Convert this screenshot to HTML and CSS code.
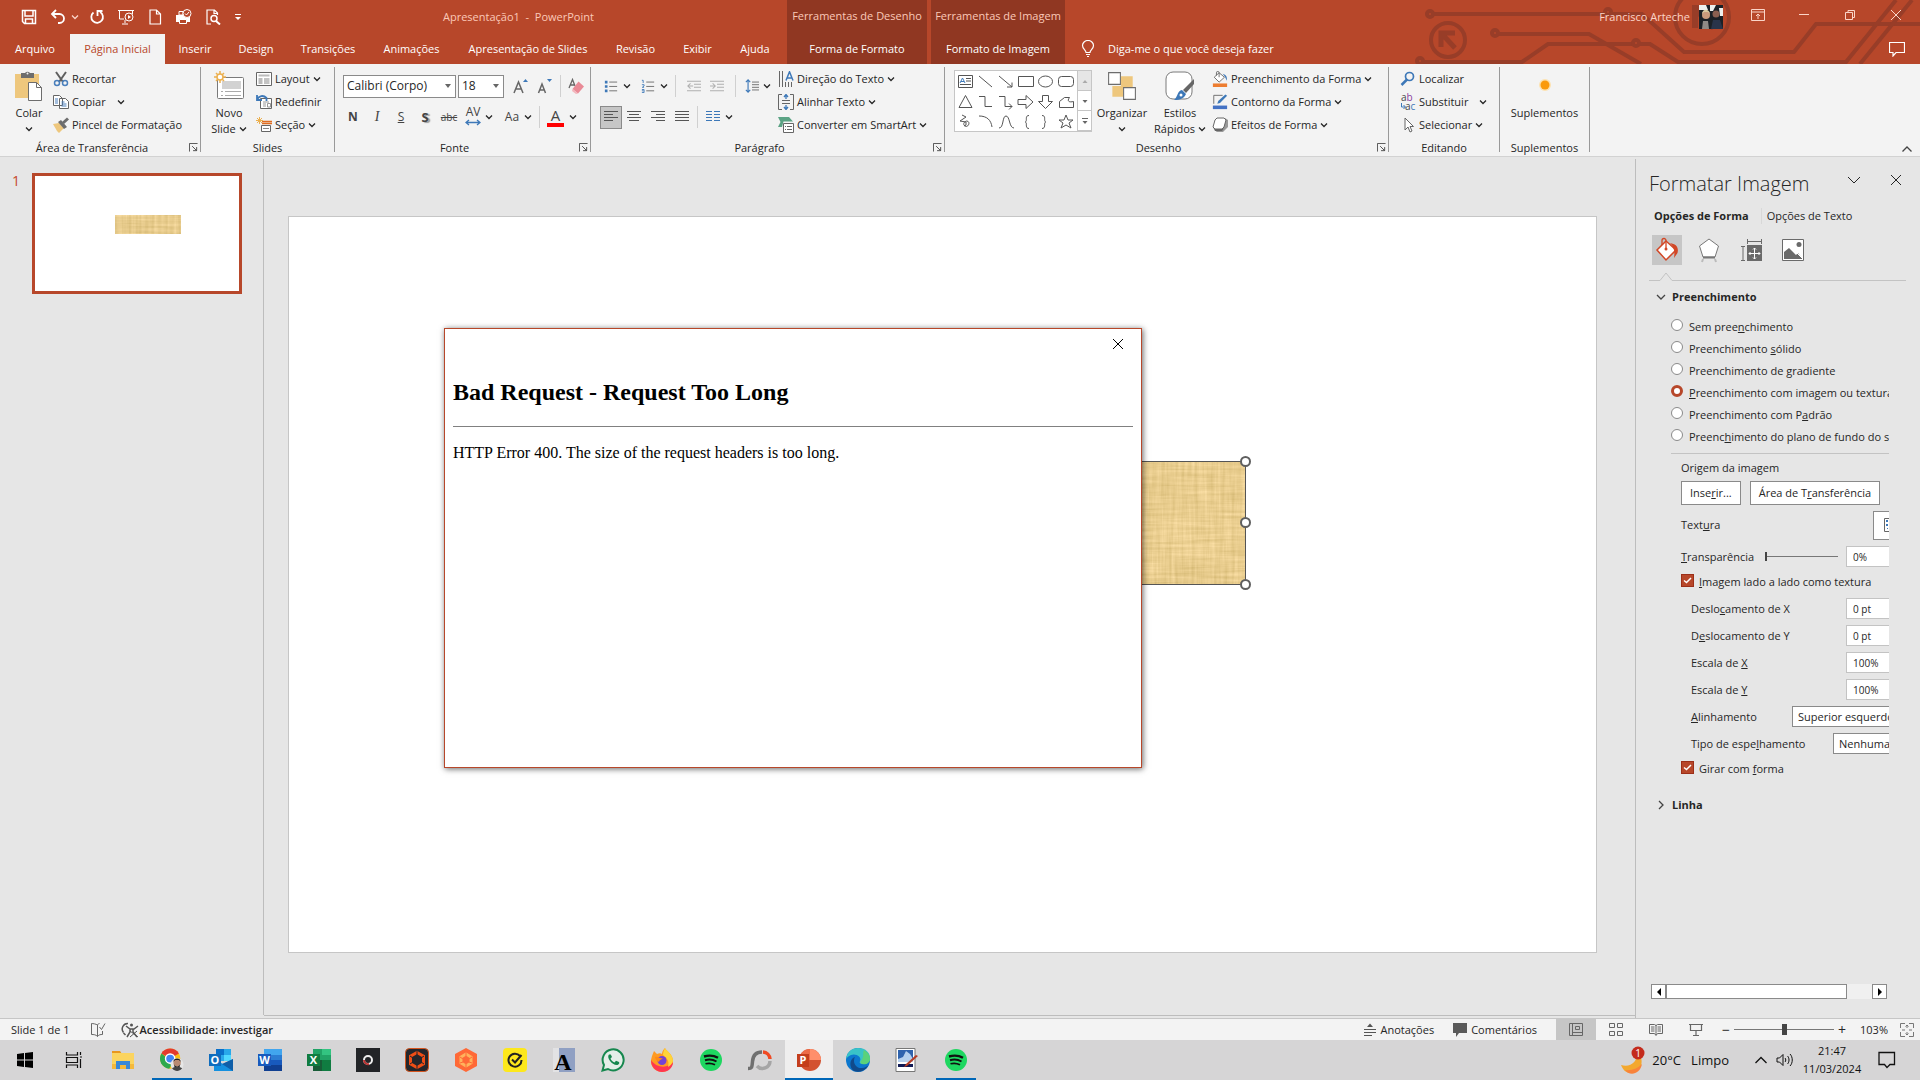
FILE: index.html
```html
<!DOCTYPE html>
<html lang="pt-BR">
<head>
  <meta charset="UTF-8" />
  <meta name="viewport" content="width=device-width, initial-scale=1.0"/>
  <title>Apresentação1 - PowerPoint</title>
  <link rel="stylesheet" href="styles.css">
</head>
<body>
  <!-- icon sprite -->
  <svg class="sprite" aria-hidden="true">
    <symbol id="chev" viewBox="0 0 8 8"><path d="M1 2.500 4 5.500 7 2.500" fill="none" stroke="currentColor" stroke-width="1.300"/></symbol>
    <symbol id="launch" viewBox="0 0 10 10"><path d="M9.500 .5H.5v9M3.500 3.500l5 5M8.500 4.500v4h-4" fill="none" stroke="#444"/></symbol>
    <symbol id="close" viewBox="0 0 12 12"><path d="M1 1l10 10M11 1 1 11" fill="none" stroke="currentColor"/></symbol>
    <symbol id="save" viewBox="0 0 16 16"><path d="M1.500 1.500h13v13h-11l-2-2zM4 1.500v5.500h8v-5.500M4.500 14.500v-4.500h7v4.500" fill="none" stroke="#fff" stroke-width="1.500"/></symbol>
    <symbol id="undo" viewBox="0 0 16 16"><path d="M6 1 2 5l4 4M2 5h7.500a4 4 0 0 1 0 9H8" fill="none" stroke="#fff" stroke-width="1.800"/></symbol>
    <symbol id="redo" viewBox="0 0 16 16"><path d="M4.500 3.500a5.800 5.800 0 1 0 6.500-.5M8.500 7V2h5" fill="none" stroke="#fff" stroke-width="1.800"/></symbol>
    <symbol id="show" viewBox="0 0 16 16"><path d="M0 1.500h16M1.500 2v8H6M14.500 2v3M7 11v3M4 15h6" fill="none" stroke="#fff"/><circle cx="11" cy="8" r="4" fill="none" stroke="#fff"/><path d="M10 6l3 2-3 2z" fill="#fff"/></symbol>
    <symbol id="page" viewBox="0 0 16 16"><path d="M3 1h6.500L13.500 5v10H3zM9.500 1v4h4" fill="none" stroke="#fff" stroke-width="1.200"/></symbol>
    <symbol id="print" viewBox="0 0 16 16"><path d="M0 6h14v7H0z" fill="#fff"/><path d="M3 2.500h4V6H3zM3.500 10.500h7v4h-7z" fill="#b7472a" stroke="#fff"/><circle cx="11" cy="4.500" r="4" fill="#b7472a" stroke="#fff"/><path d="M9 4.500l1.500 1.500L13 3" fill="none" stroke="#fff"/></symbol>
    <symbol id="preview" viewBox="0 0 16 16"><path d="M12.500 6V4L9.500 1H2v14h4M9 1v3.500h3" fill="none" stroke="#fff" stroke-width="1.200"/><circle cx="9" cy="9.500" r="3" fill="none" stroke="#fff" stroke-width="1.500"/><path d="M11 12l4 3.500" stroke="#fff" stroke-width="2"/></symbol>
    <symbol id="more" viewBox="0 0 8 8"><path d="M1 1.500h6" stroke="#fff"/><path d="M1 4h6L4 7z" fill="#fff"/></symbol>
    <symbol id="bulb" viewBox="0 0 14 18"><path d="M5 12.500C5 10 1.500 9 1.500 5.500a5.500 5 0 0 1 11 0C12.500 9 9 10 9 12.500zM5 14.500h4M6 16.500h2" fill="none" stroke="#fff" stroke-width="1.200"/></symbol>
    <symbol id="balloon" viewBox="0 0 16 16"><path d="M.5 1.500h15v10H7l-3 3.500v-3.500H.5z" fill="none" stroke="currentColor" stroke-width="1.200"/></symbol>

    <symbol id="paste" viewBox="0 0 30 32"><path d="M1 4h24v24H1z" fill="#eec77d"/><path d="M7 3h4a3 3 0 0 1 5 0h4v5H7z" fill="#6d6d6d"/><circle cx="13.500" cy="3.500" r="1" fill="#f3f3f3"/><path d="M14.500 12.500h8l5 5v13h-13z" fill="#fff" stroke="#6d6d6d"/><path d="M22.500 12.500v5h5" fill="none" stroke="#6d6d6d"/></symbol>
    <symbol id="cut" viewBox="0 0 16 16"><path d="M3 1l7 10M13 1 6 11" stroke="#5f5f5f" stroke-width="2"/><circle cx="4" cy="12" r="2.500" fill="none" stroke="#4a7fbc" stroke-width="1.500"/><circle cx="12" cy="12" r="2.500" fill="none" stroke="#4a7fbc" stroke-width="1.500"/></symbol>
    <symbol id="copy" viewBox="0 0 16 16"><path d="M.5 1.500h6l3 3v7h-9zM6.500 4.500h6l3 3v7h-9z" fill="#fff" stroke="#666"/><path d="M2 5h3M2 7h3M2 9h3M8.500 8h3M8.500 10h5M8.500 12h5" stroke="#4a7fbc"/></symbol>
    <symbol id="brush" viewBox="0 0 16 16"><path d="M0 7l6-1 5 5-5 5-2-2z" fill="#eec77d"/><path d="M5 5l3-2 6 7-3 2z" fill="#6d6d6d"/><path d="M10 6l5-4.500" stroke="#6d6d6d" stroke-width="3"/></symbol>
    <symbol id="newslide" viewBox="0 0 30 30"><rect x="3.500" y="6.500" width="26" height="21" rx="1" fill="#fff" stroke="#7a7a7a"/><path d="M8 10h19v8H8z" fill="#d2d2d2"/><path d="M7 20.500h2M11 20.500h16M7 24.500h2M11 24.500h16" stroke="#aaa"/><circle cx="6" cy="6" r="3" fill="#fff" stroke="#ecb04f" stroke-width="1.500"/><path d="M6 0v3M6 9v3M0 6h3M9 6h3M2 2l2 2M8 8l2 2M10 2 8 4M2 10l2-2" stroke="#ecb04f" stroke-width="1.500"/></symbol>
    <symbol id="layout" viewBox="0 0 16 16"><path d="M.5 1.500h15v13H.5z" fill="#fff" stroke="#666"/><path d="M2.500 3.500h11v2h-11zM2.500 7h4v6h-4z" fill="#bbb"/><path d="M8 8h5.500M8 10h5.500M8 12h5.500" stroke="#888"/></symbol>
    <symbol id="reset" viewBox="0 0 16 16"><path d="M4.500 4.500h11v10h-11z" fill="#fff" stroke="#666"/><path d="M7 8h6M7 10h3M7 12h3M11.500 9.500h3v3.500h-3z" stroke="#999" fill="none"/><path d="M1 1v5h5M1 5.500C3 2 7 .5 10.500 4v3" fill="none" stroke="#3d78b8" stroke-width="1.800"/></symbol>
    <symbol id="section" viewBox="0 0 16 16"><path d="M6 4.500h10M6 6.500h10" stroke="#e06c1f" stroke-width="1.500"/><path d="M5.500 8.500h9v6h-9z" fill="#fff" stroke="#666"/><path d="M7 11.500h6" stroke="#888"/><path d="M3.500 0v7M0 3.500h7M1 1l5 5M6 1 1 6" stroke="#ecb04f"/></symbol>
    <symbol id="growA" viewBox="0 0 16 16"><path d="M1 15 5.500 4l4.500 11M3 11h5.500" fill="none" stroke="#666" stroke-width="1.500"/><path d="M10 4l2.500-3L15 4z" fill="#3d78b8"/></symbol>
    <symbol id="shrinkA" viewBox="0 0 16 16"><path d="M1.500 15 5 6l3.500 9M3 12h4" fill="none" stroke="#666" stroke-width="1.500"/><path d="M10 1l2.500 3L15 1z" fill="#3d78b8"/></symbol>
    <symbol id="eraser" viewBox="0 0 16 16"><path d="M1 10 4.500 1.500 7 8M2.500 7H6" fill="none" stroke="#666" stroke-width="1.300"/><path d="M10.500 3.500l5.500 5-6 7L4.500 11z" fill="#e98a96"/><path d="M4.500 11l5.500 4.500-2 .5-4-3z" fill="#f3b5bc"/></symbol>
    <symbol id="spacing" viewBox="0 0 16 16"><path d="M1 11.500h14M4 9l-3 2.500L4 14M12 9l3 2.500-3 2.500" fill="none" stroke="#3d78b8" stroke-width="1.300"/></symbol>
    <symbol id="bullets" viewBox="0 0 16 16"><path d="M1 2h3v3H1zM1 7h3v3H1zM1 12h3v3H1z" fill="#3d78b8"/><path d="M6 3.500h9M6 8.500h9M6 13.500h9" stroke="#666"/></symbol>
    <symbol id="numbers" viewBox="0 0 16 16"><path d="M1 1.500h1.500v3M1 6.500h2.500v1.500l-2 1.500h2M1 12h2.500v3.500H1M1 13.500h2" fill="none" stroke="#3d78b8"/><path d="M6 3.500h9M6 8.500h9M6 13.500h9" stroke="#666"/></symbol>
    <symbol id="outdent" viewBox="0 0 16 16"><path d="M0 2.500h16M8 6h8M8 9.500h8M0 13.500h16M1 8h6M4 5 1 8l3 3" fill="none" stroke="#b0b0b0" stroke-width="1.200"/></symbol>
    <symbol id="indent" viewBox="0 0 16 16"><path d="M0 2.500h16M8 6h8M8 9.500h8M0 13.500h16M0 8h6M3 5l3 3-3 3" fill="none" stroke="#b0b0b0" stroke-width="1.200"/></symbol>
    <symbol id="linesp" viewBox="0 0 16 16"><path d="M3.500 1v14M1 3.500 3.500 1 6 3.500M1 12.500 3.500 15 6 12.500" fill="none" stroke="#3d78b8" stroke-width="1.300"/><path d="M8 3.500h8M8 6.500h8M8 9.500h8M8 12.500h8" stroke="#666"/></symbol>
    <symbol id="al" viewBox="0 0 14 14"><path d="M0 1.500h14M0 4.500h9M0 7.500h14M0 10.500h9" stroke="#555"/></symbol>
    <symbol id="ac" viewBox="0 0 14 14"><path d="M0 1.500h14M2 4.500h10M0 7.500h14M2 10.500h10" stroke="#555"/></symbol>
    <symbol id="ar" viewBox="0 0 14 14"><path d="M0 1.500h14M5 4.500h9M0 7.500h14M5 10.500h9" stroke="#555"/></symbol>
    <symbol id="aj" viewBox="0 0 14 14"><path d="M0 1.500h14M0 4.500h14M0 7.500h14M0 10.500h14" stroke="#555"/></symbol>
    <symbol id="cols" viewBox="0 0 14 14"><path d="M0 1.500h6M0 4.500h6M0 7.500h6M0 10.500h6M8 1.500h6M8 4.500h6M8 7.500h6M8 10.500h6" stroke="#3d78b8"/></symbol>
    <symbol id="dir" viewBox="0 0 16 16"><path d="M1.500 0v16M4.500 0v16M7.500 11v5M10.500 11v5M13.500 11v5" stroke="#666"/><path d="M8 9.500 11.500.8 15 9.500M9 7h5" fill="none" stroke="#3d78b8" stroke-width="1.500"/></symbol>
    <symbol id="valign" viewBox="0 0 16 16"><path d="M4 .5H.5v15H4M12 .5h3.500v15H12M4 6.500h8M4 9.500h8" fill="none" stroke="#666"/><path d="M8 0v5M6 3l2-2.500L10 3M8 11v5M6 13l2 2.500L10 13" fill="none" stroke="#3d78b8" stroke-width="1.300"/></symbol>
    <symbol id="smart" viewBox="0 0 16 16"><path d="M0 0h11l4 4.500H5.500L4 10H0l2.500-5z" fill="#5ba384"/><path d="M5.500 6.500h10v9h-10z" fill="#fff" stroke="#666"/><path d="M7 9.500h1M9 9.500h5M7 12.500h1M9 12.500h5" stroke="#666"/></symbol>
    <symbol id="arrange" viewBox="0 0 28 28"><path d="M13 5h11v11H13zM5 14h10v10H5z" fill="#eec77d"/><path d="M1.500 1.500h11v11h-11zM15.500 15.500h11v11h-11z" fill="#fff" stroke="#6d6d6d"/></symbol>
    <symbol id="styles" viewBox="0 0 30 30"><rect x="1" y="1" width="26" height="27" rx="7" fill="#fff" stroke="#7a7a7a"/><path d="M29 8v5l-8 9-3-3z" fill="#666"/><path d="M17 19l4 4c-2 4-5 6-12 6 4-3 3-9 8-10z" fill="#3d78b8"/><circle cx="16" cy="24" r="1.500" fill="#fff"/></symbol>
    <symbol id="fill" viewBox="0 0 16 18"><path d="M7 2l6 5-6 5.500L1.500 7z" fill="#fff" stroke="#666"/><path d="M7 7V2a1.500 1.500 0 0 0-3 0v3" fill="none" stroke="#666"/><path d="M11 3c4 1 5.500 4 4.500 8-1-3-2-5-4.500-8z" fill="#3d78b8"/><path d="M0 14h16v4H0z" fill="#ed7d31"/></symbol>
    <symbol id="outline" viewBox="0 0 16 18"><path d="M1 11V1.500h10" fill="none" stroke="#666"/><path d="M5 11l1-3L14 .5 16 2 8 10z" fill="#3d78b8"/><path d="M0 13h16v4H0z" fill="#4472c4"/></symbol>
    <symbol id="effects" viewBox="0 0 16 16"><path d="M4 15h7l5-5V3l-3-2z" fill="#999"/><path d="M5 1h7l2 2-2 7-2 2H3L1 10 3 3z" fill="#fff" stroke="#666"/><path d="M1 10l2 4h7l3-4-2 2H3z" fill="#666"/></symbol>
    <symbol id="find" viewBox="0 0 16 16"><circle cx="9.500" cy="5.500" r="4" fill="none" stroke="#3d78b8" stroke-width="1.700"/><path d="M7 8.500 1.500 14" stroke="#3d78b8" stroke-width="2.500"/></symbol>
    <symbol id="cursor" viewBox="0 0 16 16"><path d="M5 1v12l3-3 2 5 2-1-2-4.500h3.500z" fill="#fff" stroke="#666"/></symbol>
    <symbol id="spotify" viewBox="0 0 24 24"><circle cx="12" cy="12" r="11" fill="#1ed760"/><path d="M5 8.500c5-1.500 10-1 14 1.300" stroke="#111" stroke-width="2.400" fill="none"/><path d="M6 12.300c4-1.200 8-.8 11.500 1.200" stroke="#111" stroke-width="2" fill="none"/><path d="M6.500 15.800c3.500-1 6.500-.6 9.500 1" stroke="#111" stroke-width="1.700" fill="none"/></symbol>

    <symbol id="p-fill" viewBox="0 0 26 26"><path d="M12 4 22 13 12 23 3 13z" fill="#fff" stroke="#d24726" stroke-width="1.500"/><path d="M12 12V3.500a2 2 0 0 0-4 0V8" fill="none" stroke="#d24726" stroke-width="1.300"/><circle cx="12" cy="12" r="1.500" fill="#d24726"/><path d="M16 6c6 1 9 4 7.500 10L20 21c1-7 0-11-4-15z" fill="#d24726"/></symbol>
    <symbol id="p-pent" viewBox="0 0 26 26"><path d="M13 2 22.500 9 19 20H7L3.500 9z" fill="#fff" stroke="#777"/><path d="M7 20.500h12" stroke="#777" stroke-width="2"/><path d="M7 22l-1 3M19 22l1 3" stroke="#bbb" stroke-width="2"/></symbol>
    <symbol id="p-size" viewBox="0 0 26 26"><path d="M9 8h15v16H9z" fill="#6a6a6a"/><path d="M16.500 11v11M11 16.500h11M15 12.500l1.500-1.500 1.500 1.500M15 20.500l1.500 1.500 1.500-1.500M12.500 15 11 16.500l1.500 1.500M20.500 15l1.500 1.500-1.500 1.500" fill="none" stroke="#fff"/><path d="M9.500 2v5M23.500 2v5M10 4.500h13M3 9.500h4M3 23.500h4M5 10v13" stroke="#6a6a6a"/></symbol>
    <symbol id="p-img" viewBox="0 0 26 26"><path d="M2.500 2.500h21v21h-21z" fill="#fff" stroke="#6a6a6a"/><path d="M4 22v-7l5-4 4 4 3 3 2-2 4 5v1z" fill="#6a6a6a"/><path d="M14 13l8 8" stroke="#fff"/><circle cx="19" cy="7.500" r="2.500" fill="#6a6a6a"/></symbol>
  </svg>

  <div class="app">
    <header class="header">
      <svg class="circuit" viewBox="0 0 520 64" aria-hidden="true">
        <g fill="none" stroke="#983d28" stroke-width="4">
          <circle cx="30" cy="14" r="3"/><path d="M34 14h170"/><circle cx="208" cy="12" r="3"/><path d="M212 14h30l42 38h110l22-28h104"/>
          <circle cx="48" cy="40" r="17"/><path d="M55 48 42 34M41 47V33h14" stroke-width="5"/>
          <circle cx="95" cy="33" r="3"/><path d="M99 34h90l52 30"/><circle cx="20" cy="61" r="3"/><path d="M24 62h98l26-18h84"/><circle cx="236" cy="43" r="3"/><path d="M240 44h10l28 18h168l50-62M460 64l52-64"/>
          <circle cx="302" cy="17" r="27"/><path d="M314 28 296 10M295 28V8h20" stroke-width="6"/>
        </g>
      </svg>
      <div class="head-left">
        <div class="quick">
          <button aria-label="Salvar"><svg><use href="#save"/></svg></button>
          <button aria-label="Desfazer"><svg><use href="#undo"/></svg></button>
          <button class="tiny undo-more" aria-label="Opções de desfazer"><svg><use href="#chev"/></svg></button>
          <button aria-label="Refazer"><svg><use href="#redo"/></svg></button>
          <button aria-label="Apresentar"><svg><use href="#show"/></svg></button>
          <button aria-label="Novo"><svg><use href="#page"/></svg></button>
          <button aria-label="Impressão rápida"><svg><use href="#print"/></svg></button>
          <button aria-label="Visualizar impressão"><svg><use href="#preview"/></svg></button>
          <button class="tiny" aria-label="Personalizar"><svg><use href="#more"/></svg></button>
          <span class="doc-title">Apresentação1&nbsp; - &nbsp;PowerPoint</span>
        </div>
        <nav class="tabs">
          <a href="#">Arquivo</a>
          <a href="#" class="active">Página Inicial</a>
          <a href="#">Inserir</a>
          <a href="#">Design</a>
          <a href="#">Transições</a>
          <a href="#">Animações</a>
          <a href="#">Apresentação de Slides</a>
          <a href="#">Revisão</a>
          <a href="#">Exibir</a>
          <a href="#">Ajuda</a>
        </nav>
      </div>
      <div class="context"><span>Ferramentas de Desenho</span><a href="#">Forma de Formato</a></div>
      <div class="context"><span>Ferramentas de Imagem</span><a href="#">Formato de Imagem</a></div>
      <div class="head-right">
        <div class="user-row">
          <span>Francisco Arteche</span>
          <svg class="avatar" viewBox="0 0 24 24"><path d="M0 0h24v24H0z" fill="#1b2026"/><path d="M0 0h7l2 5H0zM11 0h6l-3 6h-3zM20 3h4v8h-3z" fill="#eef0ee"/><circle cx="7" cy="10" r="4" fill="#c99a7c"/><circle cx="17" cy="9" r="3.500" fill="#8a5f50"/><path d="M3 9c0-5 7-6 8 0l-2-2H5z" fill="#d8c9a0"/><path d="M3 24l1-8h5l1 8z" fill="#8f8a86"/><path d="M12 24l2-9h7l3 9z" fill="#29344a"/></svg>
          <button aria-label="Opções da faixa"><svg viewBox="0 0 14 14"><path d="M.5 1.500h13v11H.5zM.5 4h13M7 11V6M5 8l2-2 2 2" fill="none" stroke="currentColor"/></svg></button>
          <button aria-label="Minimizar"><svg viewBox="0 0 14 14"><path d="M2 6.500h10" stroke="currentColor"/></svg></button>
          <button aria-label="Restaurar"><svg viewBox="0 0 14 14"><path d="M2.500 4.500h7v7h-7zM5 4V2.500h6.500v7H10" fill="none" stroke="currentColor"/></svg></button>
          <button class="small" aria-label="Fechar"><svg><use href="#close"/></svg></button>
        </div>
        <div class="tell-row">
          <svg class="bulb"><use href="#bulb"/></svg>
          <a href="#">Diga-me o que você deseja fazer</a>
          <button aria-label="Comentários"><svg><use href="#balloon"/></svg></button>
        </div>
      </div>
    </header>

    <section class="ribbon">
      <div class="group g-clip">
        <div class="group-body">
          <button class="big"><svg class="art"><use href="#paste"/></svg>Colar<svg class="chev"><use href="#chev"/></svg></button>
          <div class="list">
            <button><svg><use href="#cut"/></svg>Recortar</button>
            <button><svg><use href="#copy"/></svg>Copiar<svg class="chev apart"><use href="#chev"/></svg></button>
            <button><svg><use href="#brush"/></svg>Pincel de Formatação</button>
          </div>
        </div>
        <div class="group-label">Área de Transferência<button aria-label="Mais opções"><svg><use href="#launch"/></svg></button></div>
      </div>

      <div class="group g-slides">
        <div class="group-body">
          <button class="big"><svg class="art"><use href="#newslide"/></svg>Novo<span>Slide <svg class="chev"><use href="#chev"/></svg></span></button>
          <div class="list">
            <button><svg><use href="#layout"/></svg>Layout<svg class="chev"><use href="#chev"/></svg></button>
            <button><svg><use href="#reset"/></svg>Redefinir</button>
            <button><svg><use href="#section"/></svg>Seção<svg class="chev"><use href="#chev"/></svg></button>
          </div>
        </div>
        <div class="group-label">Slides</div>
      </div>

      <div class="group g-font">
        <div class="group-body stack">
          <div class="tools snug">
            <select class="combo font-name" aria-label="Fonte"><option>Calibri (Corpo)</option></select>
            <select class="combo font-size" aria-label="Tamanho da fonte"><option>18</option></select>
            <button aria-label="Aumentar fonte"><svg><use href="#growA"/></svg></button>
            <button aria-label="Diminuir fonte"><svg><use href="#shrinkA"/></svg></button>
            <i class="bar"></i>
            <button aria-label="Limpar formatação"><svg><use href="#eraser"/></svg></button>
          </div>
          <div class="tools">
            <button class="b">N</button>
            <button class="i">I</button>
            <button class="u">S</button>
            <button class="sh">S</button>
            <button class="st">abc</button>
            <button class="av">AV<svg><use href="#spacing"/></svg></button>
            <svg class="chev"><use href="#chev"/></svg>
            <button class="aa">Aa</button>
            <svg class="chev"><use href="#chev"/></svg>
            <i class="bar"></i>
            <button class="color">A</button>
            <svg class="chev"><use href="#chev"/></svg>
          </div>
        </div>
        <div class="group-label">Fonte<button aria-label="Mais opções"><svg><use href="#launch"/></svg></button></div>
      </div>

      <div class="group g-par">
        <div class="group-body">
          <div class="stack">
            <div class="tools">
              <button aria-label="Marcadores"><svg><use href="#bullets"/></svg></button><svg class="chev"><use href="#chev"/></svg>
              <button aria-label="Numeração"><svg><use href="#numbers"/></svg></button><svg class="chev"><use href="#chev"/></svg>
              <i class="bar"></i>
              <button aria-label="Diminuir recuo"><svg><use href="#outdent"/></svg></button>
              <button aria-label="Aumentar recuo"><svg><use href="#indent"/></svg></button>
              <i class="bar"></i>
              <button class="line-btn" aria-label="Espaçamento"><svg><use href="#linesp"/></svg></button><svg class="chev"><use href="#chev"/></svg>
            </div>
            <div class="tools snug">
              <button class="on" aria-label="Esquerda"><svg><use href="#al"/></svg></button>
              <button aria-label="Centro"><svg><use href="#ac"/></svg></button>
              <button aria-label="Direita"><svg><use href="#ar"/></svg></button>
              <button aria-label="Justificar"><svg><use href="#aj"/></svg></button>
              <i class="bar"></i>
              <button aria-label="Colunas"><svg><use href="#cols"/></svg></button><svg class="chev"><use href="#chev"/></svg>
            </div>
          </div>
          <div class="list">
            <button><svg><use href="#dir"/></svg>Direção do Texto<svg class="chev"><use href="#chev"/></svg></button>
            <button><svg><use href="#valign"/></svg>Alinhar Texto<svg class="chev"><use href="#chev"/></svg></button>
            <button><svg><use href="#smart"/></svg>Converter em SmartArt<svg class="chev"><use href="#chev"/></svg></button>
          </div>
        </div>
        <div class="group-label">Parágrafo<button aria-label="Mais opções"><svg><use href="#launch"/></svg></button></div>
      </div>

      <div class="group g-draw">
        <div class="group-body">
          <div class="gallery">
            <svg viewBox="0 0 122 60" fill="none" stroke="#555" aria-label="Formas">
              <path d="M3.500 4.500h14v12h-14z"/><path d="M11 7.500h5M11 10h5M5 13.500h11"/><path d="M5 12l2.500-5L10 12M6 10.500h3" stroke="#3d78b8"/>
              <path d="M24 5l13 11M44 5l13 11M57 11.500V16h-5"/>
              <path d="M63.500 5.500h15v10h-15z"/><ellipse cx="90.500" cy="10.500" rx="7" ry="5.500"/><rect x="103.500" y="5.500" width="15" height="10" rx="3"/>
              <path d="M10.500 24.500 17 36.500H4zM24 25.500h6v10h7M44 25.500h6v10h7M54 32.500l3 3-3 3"/>
              <path d="M63 28.500h8v-4l7 6.500-7 6.500v-4h-8zM87.500 24.500h6v6h4l-7 7-7-7h4zM104.500 36.500v-6l5-4h5c-3 4 0 5 4 4v6z"/>
              <path d="M7 44l4 2-6 4 6 1 0 3-2 1M12 50c4 1 1 7-2 5s0-5 2-5M24 45c8 0 12 4 13 11M44 57c5 0 3-12 7-12s3 12 8 12"/>
              <path d="M74 44.500c-4 0-2 4-3 6-1 1-1 0 0 1s-1 6 3 6M87 44.500c4 0 2 4 3 6 1 1 1 0 0 1s1 6-3 6M111 44l2 5h5l-4 3 2 5-5-3-5 3 2-5-4-3h5z"/>
            </svg>
            <div class="gallery-nav">
              <button class="off" aria-label="Acima"><svg viewBox="0 0 8 8"><path d="M1.500 6h5L4 3z" fill="#aaa"/></svg></button>
              <button aria-label="Abaixo"><svg viewBox="0 0 8 8"><path d="M1.500 3h5L4 6z" fill="#666"/></svg></button>
              <button aria-label="Mais"><svg viewBox="0 0 8 8"><path d="M1 1.500h6" stroke="#666"/><path d="M1.500 4h5L4 7z" fill="#666"/></svg></button>
            </div>
          </div>
          <button class="big"><svg class="art"><use href="#arrange"/></svg>Organizar<svg class="chev"><use href="#chev"/></svg></button>
          <button class="big"><svg class="art"><use href="#styles"/></svg>Estilos<span>Rápidos <svg class="chev"><use href="#chev"/></svg></span></button>
          <div class="list">
            <button><svg><use href="#fill"/></svg>Preenchimento da Forma<svg class="chev"><use href="#chev"/></svg></button>
            <button><svg><use href="#outline"/></svg>Contorno da Forma<svg class="chev"><use href="#chev"/></svg></button>
            <button><svg><use href="#effects"/></svg>Efeitos de Forma<svg class="chev"><use href="#chev"/></svg></button>
          </div>
        </div>
        <div class="group-label">Desenho<button aria-label="Mais opções"><svg><use href="#launch"/></svg></button></div>
      </div>

      <div class="group g-edit">
        <div class="group-body">
          <div class="list">
            <button><svg><use href="#find"/></svg>Localizar</button>
            <button><svg class="abac" viewBox="0 0 16 20"><text x="1" y="9">a<tspan class="violet">b</tspan></text><text x="5" y="18">a<tspan class="blue">c</tspan></text><path d="M1.500 11v4H5M3.500 13l2 2-2 2" fill="none" stroke="#3d78b8"/></svg>Substituir<svg class="chev apart"><use href="#chev"/></svg></button>
            <button><svg><use href="#cursor"/></svg>Selecionar<svg class="chev"><use href="#chev"/></svg></button>
          </div>
        </div>
        <div class="group-label">Editando</div>
      </div>

      <div class="group g-addin">
        <div class="group-body">
          <button class="big"><svg class="art" viewBox="0 0 30 30"><circle cx="15" cy="14" r="6" fill="#fde2b0"/><circle cx="15" cy="14" r="4.500" fill="#fa9a0c"/></svg>Suplementos</button>
        </div>
        <div class="group-label">Suplementos</div>
      </div>
      <button class="collapse" aria-label="Recolher"><svg viewBox="0 0 12 8"><path d="M1.500 6.500 6 2l4.500 4.500" fill="none" stroke="#444" stroke-width="1.300"/></svg></button>
    </section>

    <main class="workspace">
      <div class="thumbs">
        <span>1</span>
        <div class="thumb">
          <svg class="texture" aria-hidden="true"><rect width="100%" height="100%" filter="url(#papyrus)"/></svg>
        </div>
      </div>

      <div class="canvas">
        <div class="slide">
          <div class="shape">
            <svg class="texture" aria-hidden="true">
              <defs>
                <filter id="papyrus" x="0" y="0" width="100%" height="100%" color-interpolation-filters="sRGB">
                  <feTurbulence type="fractalNoise" baseFrequency="0.02 0.35" numOctaves="3" seed="4"/>
                  <feColorMatrix values="0.25 0 0 0 0.79  0.25 0 0 0 0.68  0.32 0 0 0 0.4  0 0 0 0 1" result="h"/>
                  <feTurbulence type="fractalNoise" baseFrequency="0.3 0.02" numOctaves="3" seed="9"/>
                  <feColorMatrix values="0.25 0 0 0 0.79  0.25 0 0 0 0.68  0.32 0 0 0 0.4  0 0 0 0 1"/>
                  <feComposite in2="h" operator="arithmetic" k2="0.5" k3="0.5"/>
                </filter>
              </defs>
              <rect width="100%" height="100%" filter="url(#papyrus)"/>
            </svg>
            <i class="handle top"></i><i class="handle mid"></i><i class="handle bottom"></i>
          </div>
        </div>
      </div>

      <aside class="pane">
        <div class="pane-head">
          <h2>Formatar Imagem</h2>
          <button aria-label="Opções do painel"><svg viewBox="0 0 14 14"><path d="M1 4l6 6 6-6" fill="none" stroke="currentColor"/></svg></button>
          <button aria-label="Fechar painel"><svg><use href="#close"/></svg></button>
        </div>
        <div class="pane-tabs"><a href="#" class="active">Opções de Forma</a><a href="#">Opções de Texto</a></div>
        <div class="pane-icons">
          <button class="on" aria-label="Preenchimento e Linha"><svg><use href="#p-fill"/></svg></button>
          <button aria-label="Efeitos"><svg><use href="#p-pent"/></svg></button>
          <button aria-label="Tamanho"><svg><use href="#p-size"/></svg></button>
          <button aria-label="Imagem"><svg><use href="#p-img"/></svg></button>
        </div>
        <svg class="notch" viewBox="0 0 257 10"><path d="M0 8.500h11L17 1l6 7.500h234" fill="none" stroke="#c3c3c3"/></svg>
        <div class="pane-clip">
          <form class="fill-form">
            <h3><svg viewBox="0 0 10 10"><path d="M1 3l4 4 4-4" fill="none" stroke="#444" stroke-width="1.300"/></svg>Preenchimento</h3>
            <div class="radios">
              <label><input type="radio" name="fill"><span>Sem pree<u>n</u>chimento</span></label>
              <label><input type="radio" name="fill"><span>Preenchimento <u>s</u>ólido</span></label>
              <label><input type="radio" name="fill"><span>Preenchimento de <u>g</u>radiente</span></label>
              <label><input type="radio" name="fill" checked><span><u>P</u>reenchimento com imagem ou textura</span></label>
              <label><input type="radio" name="fill"><span>Preenchimento com P<u>a</u>drão</span></label>
              <label><input type="radio" name="fill"><span>Preenc<u>h</u>imento do plano de fundo do slide</span></label>
            </div>
            <div class="source">
              <p>Origem da imagem</p>
              <button type="button">Inse<u>r</u>ir...</button>
              <button type="button">Área de T<u>r</u>ansferência</button>
            </div>
            <div class="field tall">
              <span>Text<u>u</u>ra</span>
              <button type="button" class="tex-btn" aria-label="Textura"><svg viewBox="0 0 16 16"><path d="M.5 1.500h15v13H.5z" fill="#fff" stroke="#666"/><path d="M2 3h2v2H2zM5 3h2v2H5zM2 7h2v2H2zM5 8h2v1H5zM3 11h1v1H3z" fill="#3d78b8"/></svg></button>
            </div>
            <div class="field"><label for="transp"><u>T</u>ransparência</label><input type="range" id="transp" value="0" min="0" max="100"><input type="text" aria-label="Transparência em %" value="0%"></div>
            <label class="check"><input type="checkbox" checked><span><u>I</u>magem lado a lado como textura</span></label>
            <div class="inner">
              <div class="field"><label for="dx">Deslo<u>c</u>amento de X</label><input type="text" id="dx" value="0 pt"></div>
              <div class="field"><label for="dy">D<u>e</u>slocamento de Y</label><input type="text" id="dy" value="0 pt"></div>
              <div class="field"><label for="sx">Escala de <u>X</u></label><input type="text" id="sx" value="100%"></div>
              <div class="field"><label for="sy">Escala de <u>Y</u></label><input type="text" id="sy" value="100%"></div>
              <div class="field"><label for="align"><u>A</u>linhamento</label><select id="align" class="wide"><option>Superior esquerdo</option></select></div>
              <div class="field"><label for="mirror">Tipo de espe<u>l</u>hamento</label><select id="mirror"><option>Nenhuma</option></select></div>
            </div>
            <label class="check"><input type="checkbox" checked><span>Girar com <u>f</u>orma</span></label>
            <h3 class="line"><svg viewBox="0 0 10 10"><path d="M3 1l4 4-4 4" fill="none" stroke="#444" stroke-width="1.300"/></svg>Linha</h3>
          </form>
        </div>
        <div class="hscroll">
          <button aria-label="Rolar à esquerda"><svg viewBox="0 0 8 8"><path d="M6 0v8L2 4z"/></svg></button>
          <div class="hthumb"></div>
          <button aria-label="Rolar à direita"><svg viewBox="0 0 8 8"><path d="M2 0v8l4-4z"/></svg></button>
        </div>
      </aside>

      <div class="dialog" role="dialog">
        <button aria-label="Fechar"><svg><use href="#close"/></svg></button>
        <h2>Bad Request - Request Too Long</h2>
        <hr>
        <p>HTTP Error 400. The size of the request headers is too long.</p>
      </div>
    </main>

    <footer class="status">
      <span>Slide 1 de 1</span>
      <svg class="book" viewBox="0 0 16 14"><path d="M7.500 2v11.500M7.500 2C6 1 3 .5 1.500 .5v11c2 0 4.500 0 6 2 1.500-2 3-2 5-2V8M7.500 2c.5-1 1-1.500 2-1.500M9.500 4l2 2.500 3.500-6" fill="none" stroke="#666"/></svg>
      <svg class="a11y" viewBox="0 0 18 16"><path d="M7 1.500a5.500 5.500 0 0 0-4.500 9M2.500 11l2 2M5 4l4 3h4l4-3M9 7v3l-3 5M12 7v3l4 5" fill="none" stroke="#555" stroke-width="1.500"/><circle cx="10.500" cy="3" r="1.500" fill="#555"/><path d="M9 9l8 6M16 9l-7 6" stroke="#555"/></svg>
      <strong>Acessibilidade: investigar</strong>
      <div class="status-right">
        <button class="notes"><svg viewBox="0 0 14 14"><path d="M4 4l3-3.500L10 4z" fill="#555"/><path d="M1 6.500h12M1 9.500h12M1 12.500h8" stroke="#555"/></svg>Anotações</button>
        <button class="comments"><svg viewBox="0 0 14 14"><path d="M0 0h14v10H6l-3 4v-4H0z" fill="#5a5a5a"/></svg>Comentários</button>
        <button class="view on" aria-label="Normal"><svg viewBox="0 0 14 14"><path d="M.5 .5h13v12H.5zM3.500 1v11.500M4 9.500h9.500M6.500 3.500h4v3h-4z" fill="none" stroke="#666"/></svg></button>
        <button class="view" aria-label="Classificação"><svg viewBox="0 0 14 14"><path d="M.5 .5h5v4h-5zM8.500 .5h5v4h-5zM.5 8.500h5v4h-5zM8.500 8.500h5v4h-5z" fill="none" stroke="#666"/></svg></button>
        <button class="view" aria-label="Leitura"><svg viewBox="0 0 14 14"><path d="M.5 1.500h5l1.500 1 1.500-1h5v9h-5L7 12.500l-1.500-2h-5zM7 2v10M2 4h3.500M2 6h3.500M2 8h3.500M8.500 4H12M8.500 6H12M8.500 8H12" fill="none" stroke="#666"/></svg></button>
        <button class="view" aria-label="Apresentação"><svg viewBox="0 0 14 14"><path d="M0 1.500h14M1.500 2v5.500h11V2M7 8v4M4 12.500h6" fill="none" stroke="#666" stroke-width="1.200"/></svg></button>
        <button class="step" aria-label="Menos zoom">−</button>
        <input type="range" class="zoom" aria-label="Zoom" min="0" max="100" value="50">
        <button class="step" aria-label="Mais zoom">+</button>
        <span class="pct">103%</span>
        <button class="fit" aria-label="Ajustar"><svg viewBox="0 0 14 14"><path d="M5 .5H.5V5M9 .5h4.500V5M5 13.500H.5V9M9 13.500h4.500V9M7 2v3M7 9v3M2 7h3M9 7h3M5.500 3.500 7 2l1.500 1.500M5.500 10.500 7 12l1.500-1.500" fill="none" stroke="#777"/></svg></button>
      </div>
    </footer>

    <footer class="taskbar">
      <button aria-label="Iniciar"><svg viewBox="0 0 24 24"><path d="M4 6l7-1v6.500H4zM12 5l8-1v7.500h-8zM4 12.500h7V19l-7-1zM12 12.500h8V20l-8-1z"/></svg></button>
      <button aria-label="Visão de tarefas"><svg viewBox="0 0 24 24"><path d="M4.500 4v3h11V4M4.500 9.500h11v5h-11zM4.500 20v-3h11v3M18.500 4v3M18.500 11v9M18 9h2" fill="none" stroke="#111" stroke-width="1.200"/></svg></button>
      <button aria-label="Explorador"><svg viewBox="0 0 24 24"><path d="M1 3h8l2 3H1z" fill="#e8971e"/><path d="M1 5h22v16H1z" fill="#fbd45f"/><path d="M1 16h22v5H1z" fill="#f5b93c"/><path d="M5 13h14v8h-4v-4H9v4H5z" fill="#3988d8"/></svg></button>
      <button class="open" aria-label="Chrome"><svg viewBox="0 0 26 26"><circle cx="11" cy="11.500" r="11" fill="#fbc116"/><path d="M11 11.500 1.500 6a11 11 0 0 1 19 0z" fill="#e33b2e"/><path d="M1.500 6A11 11 0 0 0 10 22.500l4-7z" fill="#2da94f"/><circle cx="11" cy="11.500" r="5" fill="#4285f4" stroke="#fff" stroke-width="1.500"/><circle cx="18.500" cy="18" r="7" fill="#e6e6e6"/><circle cx="18.500" cy="16" r="4" fill="#b88a72"/><path d="M14.500 15c0-5 8-5 8 0l-2-2h-4zM15 17c1 4 6 4 7 0l-1 5h-5z" fill="#222"/><path d="M13 22c2-2 9-2 11 0-3 4-8 4-11 0z" fill="#444"/></svg></button>
      <button aria-label="Outlook"><svg viewBox="0 0 24 24"><path d="M7 1h15v12H7z" fill="#28a8ea"/><path d="M7 1h8v6H7z" fill="#0a6fc9"/><path d="M15 7h7v6h-7z" fill="#50d9ff"/><path d="M5 11l9 5 10-5v12H5z" fill="#1490df"/><path d="M24 11v12L13 16z" fill="#0f5ea8"/><rect y="6" width="12" height="12" fill="#0f6cbd"/><text x="6" y="16" class="logo-letter">O</text></svg></button>
      <button aria-label="Word"><svg viewBox="0 0 24 24"><path d="M6 1h18v6H6z" fill="#41a5ee"/><path d="M6 7h18v5H6z" fill="#2b7cd3"/><path d="M6 12h18v5H6z" fill="#185abd"/><path d="M6 17h18v6H6z" fill="#103f91"/><rect y="6" width="13" height="12" fill="#185abd"/><text x="6.500" y="16" class="logo-letter">W</text></svg></button>
      <button aria-label="Excel"><svg viewBox="0 0 24 24"><path d="M6 1h18v22H6z" fill="#21a366"/><path d="M15 1h9v6h-9z" fill="#33c481"/><path d="M6 12h9v11H6z" fill="#185c37"/><path d="M15 12h9v11h-9z" fill="#107c41"/><rect y="6" width="13" height="12" fill="#107c41"/><text x="6.500" y="16" class="logo-letter">X</text></svg></button>
      <button aria-label="Gravador"><svg viewBox="0 0 24 24"><path d="M0 0h24v24H0z" fill="#222427"/><circle cx="12" cy="12" r="4" fill="none" stroke="#eee" stroke-width="2"/><path d="M8 12a4 4 0 0 0 5 4" stroke="#b33" stroke-width="2" fill="none"/></svg></button>
      <button aria-label="Cubo escuro"><svg viewBox="0 0 24 24"><rect x=".5" y=".5" width="23" height="23" rx="4" fill="#25262b" stroke="#d6541d"/><path d="M12 4.500l6.500 3.700v7.600L12 19.500l-6.500-3.700V8.200z" fill="none" stroke="#f04e16" stroke-width="3"/><path d="M12 3v4M19 8l-3 2M19 16l-3-2M12 21v-4M5 16l3-2M5 8l3 2" stroke="#25262b"/></svg></button>
      <button aria-label="Cubo laranja"><svg viewBox="0 0 24 24"><path d="M12 0l11 6v12l-11 6-11-6V6z" fill="#ff6937"/><path d="M12 6l5 3v6l-5 3-5-3V9z" fill="none" stroke="#ffb35c" stroke-width="3"/><path d="M12 4v4M18 9l-3 2M18 15l-3-1M12 20v-4M6 15l3-1M6 9l3 2" stroke="#ff6937"/></svg></button>
      <button aria-label="Norton"><svg viewBox="0 0 24 24"><rect width="24" height="24" rx="4" fill="#fde81c"/><path d="M17 8A6.500 6.500 0 1 0 18.500 12" fill="none" stroke="#222" stroke-width="2"/><path d="M9 11.500l3 3L18.500 7" fill="none" stroke="#222" stroke-width="2"/></svg></button>
      <button aria-label="Fonte A"><svg class="spill" viewBox="0 0 24 24"><path d="M1 0h7v24H1z" fill="#e2e2e4"/><path d="M7 0h16v24H7z" fill="#90a0c3"/><text x="11" y="22" class="serif-letter">A</text></svg></button>
      <button aria-label="WhatsApp"><svg viewBox="0 0 24 24"><path d="M1.500 22.500 3 17A10.500 10.500 0 1 1 7 21z" fill="#e4eee8" stroke="#16874e" stroke-width="2"/><path d="M8 6.500c-3 3 3 11 8.500 10.500 2-1 2-2 1.500-3l-3-1.200-1.500 1.700c-2-.8-3.500-2.300-4-4L11 9 9.800 6.500z" fill="#16874e"/></svg></button>
      <button aria-label="Firefox"><svg viewBox="0 0 24 24"><path d="M2 8l2-5 3 3c2-1 4-1 5 0 0-3 2-5 3-6 1 3 8 6 8 13 0 6-5 11-11 11S0 19 1 12z" fill="#ff9a22"/><path d="M1 12c0 8 6 12 11 12 6 0 11-4 11-10-3 5-15 8-22-2z" fill="#ff3650"/><path d="M15 0c1 3 8 6 8 13-1 3-3 5-5 6 2-7-2-9-5-12 0-3 1-5 2-7z" fill="#ffd43a"/><circle cx="12" cy="12.500" r="4.500" fill="#7542d5"/><path d="M5 9c3-1 4 2 8 1-2 2-4 2-4 4-2-1-4-3-4-5z" fill="#ff8a16"/></svg></button>
      <button aria-label="Spotify"><svg><use href="#spotify"/></svg></button>
      <button aria-label="Monitor"><svg viewBox="0 0 24 24"><path d="M0 20.500c4 0 4-1 4.500-7C5 7 8 4 14 4" fill="none" stroke="#707070" stroke-width="3.500"/><path d="M15 4a7.500 7.500 0 0 1 7 7" fill="none" stroke="#f04a23" stroke-width="3.500"/><path d="M22 13a7.500 7.500 0 0 1-13 5" fill="none" stroke="#a5a5a5" stroke-width="3.500"/></svg></button>
      <button class="open current" aria-label="PowerPoint"><svg viewBox="0 0 24 24"><circle cx="13" cy="12" r="11" fill="#d35230"/><path d="M13 1v11h11A11 11 0 0 0 13 1z" fill="#ff8f6b"/><path d="M13 1v11H2A11 11 0 0 1 13 1z" fill="#ed6c47"/><rect y="6" width="12" height="13" fill="#c43e1c"/><text x="6" y="16" class="logo-letter">P</text></svg></button>
      <button aria-label="Edge"><svg viewBox="0 0 24 24"><circle cx="12" cy="12" r="12" fill="#0c77ce"/><path d="M0 11C1 3 7 0 12 0c8 0 12 5 12 10 0 4-3 6-7 6-3 0-4-1-3-3 2-4-4-8-9-6-3 1-4 3-5 4z" fill="#39c3c8"/><path d="M18 2c5 3 6 6 6 9 0 4-4 6-8 5-2-1-2-2-1-3 4-5 1-8 3-11z" fill="#5bd27a"/><path d="M9 9c-3 5 1 12 7 11 3 0 5-2 6-2-3 5-9 7-14 5C3 20 3 11 9 9z" fill="#114a8b"/></svg></button>
      <button aria-label="Editor"><svg viewBox="0 0 24 24"><path d="M1 .5h19v23H1z" fill="#fff" stroke="#777"/><path d="M3 2h15v12H3z" fill="#2f62ad"/><path d="M3 11l5-2 3-6 4 3 3 5v3H3z" fill="#b5cfed"/><path d="M3 16h15v3H3z" fill="#111a55"/><path d="M23 8 12 18l-3 1 2-3L21 7z" fill="#b43c26"/></svg></button>
      <button class="open" aria-label="Spotify"><svg><use href="#spotify"/></svg></button>
      <div class="tray">
        <svg class="moon" viewBox="0 0 24 28"><path d="M0 19c9 3 17-3 16-13 7 4 7 20-6 21C5 27 2 24 0 19z" fill="#f3a82e"/><path d="M4 24c6 1 12-1 17-6-2 11-13 12-17 6z" fill="#f9833b"/><circle cx="17" cy="7" r="6.500" fill="#c42b1c"/><text x="17" y="11" class="badge-text">1</text></svg>
        <span class="weather">20°C&nbsp;&nbsp; Limpo</span>
        <svg class="up" viewBox="0 0 14 10"><path d="M1.500 8 7 2.500 12.500 8" fill="none" stroke="#111" stroke-width="1.300"/></svg>
        <svg class="speaker" viewBox="0 0 18 16"><path d="M1 6h2.500L7 2.500v11L3.500 10H1zM9 6c1 1 1 3 0 4M11.500 4c2 2 2 6 0 8M14 2c3 3 3 9 0 12" fill="none" stroke="#111"/></svg>
        <div class="clock"><span>21:47</span><span>11/03/2024</span></div>
        <svg class="notify" viewBox="0 0 18 18"><path d="M1 1.500h15.500v12H12l-3 3-2.500-3H1z" fill="none" stroke="#111" stroke-width="1.300"/></svg>
      </div>
    </footer>
  </div>
</body>
</html>
```
FILE: styles.css
```css
* {
  box-sizing: border-box;
}

body {
  margin: 0;
  font-family: "Segoe UI", "Open Sans", sans-serif;
  font-size: 11px;
  line-height: 16px;
  color: #262626;
}

button {
  font: inherit;
  color: inherit;
  background: none;
  border: none;
  padding: 0;
  display: flex;
  align-items: center;
  justify-content: center;
  white-space: nowrap;
}

a {
  color: inherit;
  text-decoration: none;
}

svg {
  display: block;
  flex: none;
}

.sprite {
  position: absolute;
  width: 0;
  height: 0;
}

.app {
  height: 100vh;
  display: flex;
  flex-direction: column;
  overflow: hidden;
}

.chev {
  width: 8px;
  height: 8px;
}

/* header */
.header {
  position: relative;
  display: flex;
  height: 64px;
  background: #b7472a;
  color: #fff;
}

.circuit {
  position: absolute;
  right: 0;
  top: 0;
  width: 520px;
  height: 64px;
}

.head-left {
  width: 787px;
}

.quick {
  display: flex;
  align-items: center;
  height: 34px;
  padding-left: 21px;
  gap: 13px;
}

.quick button,
.quick svg {
  width: 16px;
  height: 16px;
}

.quick .tiny,
.quick .tiny svg {
  width: 8px;
  height: 8px;
}

.quick .undo-more {
  margin: 0 -3px 0 -8px;
  color: #fbd5c8;
}

.doc-title {
  margin-left: 188px;
  color: #fbc9b8;
}

.tabs {
  display: grid;
  grid-template-columns: 70px 95px 60px 62px 82px 85px 148px 67px 57px 58px;
  height: 30px;
}

.tabs a {
  display: flex;
  align-items: center;
  justify-content: center;
  white-space: nowrap;
}

.tabs .active {
  background: #f3f3f3;
  color: #b7472a;
}

.context {
  position: relative;
  width: 140px;
  background: #903722;
  text-align: center;
  white-space: nowrap;
}

.context + .context {
  width: 134px;
  margin-left: 4px;
}

.context span,
.context a {
  display: block;
  height: 34px;
  line-height: 32px;
  color: #fbc9b8;
}

.context a {
  height: 30px;
  line-height: 30px;
  color: #fff;
}

.head-right {
  position: relative;
  flex: 1;
}

.user-row {
  display: flex;
  align-items: center;
  justify-content: flex-end;
  height: 34px;
  padding-right: 17px;
  color: #fbd5c8;
}

.user-row button {
  width: 14px;
  height: 18px;
  align-items: flex-start;
  margin-left: 32px;
}

.user-row .avatar + button {
  margin-left: 28px;
}

.user-row button svg {
  width: 14px;
  height: 14px;
}

.user-row .small svg {
  width: 12px;
}

.avatar {
  width: 24px;
  height: 24px;
  margin-left: 9px;
}

.tell-row {
  display: flex;
  align-items: center;
  height: 30px;
  padding: 0 15px 0 16px;
}

.bulb {
  width: 14px;
  height: 18px;
  margin-right: 13px;
}

.tell-row button {
  margin-left: auto;
}

.tell-row button svg {
  width: 16px;
  height: 16px;
}

/* ribbon */
.ribbon {
  position: relative;
  display: flex;
  height: 93px;
  padding-top: 3px;
  background: #f3f3f3;
  border-bottom: 1px solid #d2d2d2;
}

.group {
  display: flex;
  flex-direction: column;
  border-right: 1px solid #999;
  height: 85px;
}

.g-clip { width: 201px; }
.g-slides { width: 134px; }
.g-font { width: 256px; }
.g-par { width: 354px; }
.g-draw { width: 444px; }
.g-edit { width: 111px; }
.g-addin { width: 90px; }

.group-body {
  display: flex;
  flex: none;
  height: 73px;
}

.group-label {
  position: relative;
  text-align: center;
  height: 16px;
  line-height: 16px;
  padding-right: 16px;
}

.g-slides .group-label,
.g-edit .group-label,
.g-addin .group-label {
  padding-right: 0;
}

.group-label button {
  position: absolute;
  right: 2px;
  top: 3px;
}

.group-label svg {
  width: 9px;
  height: 9px;
}

.big {
  flex-direction: column;
  justify-content: flex-start;
  width: 58px;
  padding-top: 3px;
}

.big .art {
  width: 30px;
  height: 32px;
  margin-bottom: 3px;
}

.big span {
  display: flex;
  align-items: center;
  gap: 3px;
}

.big > .chev {
  margin-top: 4px;
}

.list {
  display: flex;
  flex-direction: column;
}

.list button {
  justify-content: flex-start;
  height: 23px;
  gap: 3px;
}

.list svg {
  width: 16px;
  height: 16px;
}

.list .chev {
  width: 8px;
  height: 8px;
}

.list .apart {
  margin-left: 8px;
}

.g-clip .list { margin-left: -5px; }
.g-slides .big { width: 54px; }
.g-slides .group-body { padding-left: 1px; }

.g-font .group-body {
  padding-left: 8px;
}

.stack {
  display: flex;
  flex-direction: column;
  padding-top: 7px;
  gap: 7px;
}

.tools {
  display: flex;
  align-items: center;
  height: 24px;
}

.tools button {
  width: 24px;
  height: 23px;
  color: #444;
}

.tools button svg {
  width: 14px;
  height: 14px;
}

.tools .bar {
  width: 1px;
  height: 22px;
  margin: 0 7px;
  background: #d0d0d0;
}

.snug .bar {
  margin: 0 3px;
}

.combo {
  appearance: none;
  height: 23px;
  margin-right: 2px;
  padding: 0 3px;
  font: inherit;
  font-size: 12px;
  color: inherit;
  border: 1px solid #8a8a8a;
  border-radius: 0;
  background: #fff url("data:image/svg+xml,%3Csvg xmlns='http://www.w3.org/2000/svg' width='8' height='8'%3E%3Cpath d='M1 2h6L4 6z' fill='%23666'/%3E%3C/svg%3E") no-repeat right 3px center;
}

.font-name { width: 113px; }
.font-size { width: 46px; }

.g-font .snug button svg {
  width: 16px;
  height: 16px;
}

.font-size + button {
  margin-left: 3px;
}

.tools .b { font-weight: bold; font-size: 12px; margin-left: -2px; }
.tools .i { font-style: italic; font-family: "Liberation Serif", serif; font-size: 14px; }
.tools .u { text-decoration: underline; font-size: 12px; }
.tools .sh { font-weight: bold; font-size: 13px; text-shadow: 2px 1px 1px #999; }
.tools .st { text-decoration: line-through; font-size: 10px; }
.tools .av { flex-direction: column; font-size: 12px; line-height: 12px; justify-content: flex-start; }
.tools .av svg { width: 16px; height: 16px; margin-top: -7px; }
.tools .aa { font-size: 12px; margin-left: 7px; }
.tools .color { font-size: 15px; line-height: 15px; width: 17px; height: 19px; border-bottom: 4px solid #f00; margin-right: 5px; }
.tools .on { width: 22px; border: 1px solid #8a8a8a; background: #c6c6c6; }

.g-par .stack { width: 180px; padding-left: 9px; }
.g-par .list { padding-left: 7px; }
.g-par .tools .chev + button { margin-left: 6px; }
.g-par .tools .line-btn { margin-left: -3px; }

.g-draw .group-body { padding-left: 9px; }

.gallery {
  display: flex;
  width: 138px;
  height: 62px;
  margin: 3px 1px 0 0;
  border: 1px solid #c6c6c6;
  background: #fff;
}

.gallery > svg {
  width: 122px;
  height: 60px;
}

.gallery-nav {
  flex: 1;
  display: grid;
  grid-template-rows: repeat(3, 20px);
}

.gallery-nav button {
  border-left: 1px solid #c6c6c6;
  border-bottom: 1px solid #c6c6c6;
}

.gallery-nav .off { background: #e6e6e6; }
.gallery-nav svg { width: 8px; height: 8px; }

.g-draw .list { margin-left: 3px; }
.g-edit .list { margin-left: 11px; }
.g-addin .big { width: 90px; }

.list .abac {
  height: 20px;
  font-size: 10px;
  fill: #444;
}

.violet { fill: #8a3fa0; }
.blue { fill: #3d78b8; }

.collapse {
  margin-left: auto;
  align-self: flex-end;
  padding: 0 7px 3px;
}

.collapse svg {
  width: 12px;
  height: 8px;
}

/* workspace */
.workspace {
  position: relative;
  flex: 1;
  display: flex;
  padding-top: 2px;
  min-height: 0;
  background: #e6e6e6;
}

.thumbs {
  display: flex;
  width: 264px;
  padding: 14px 0 0 12px;
  border-right: 1px solid #bdbdbd;
  margin-bottom: 3px;
}

.thumbs span {
  width: 20px;
  font-size: 14px;
  color: #c5482a;
}

.thumb {
  position: relative;
  width: 210px;
  height: 121px;
  border: 3px solid #b7472a;
  background: #fff;
}

.thumb .texture {
  position: absolute;
  left: 80px;
  top: 39px;
  width: 66px;
  height: 19px;
}

.canvas {
  flex: 1;
  display: flex;
  padding: 57px 38px 62px 24px;
  margin-bottom: 2px;
  border-bottom: 1px solid #bdbdbd;
}

.slide {
  position: relative;
  flex: 1;
  background: #fff;
  border: 1px solid #c6c6c6;
}

.shape {
  position: absolute;
  left: 532px;
  top: 244px;
  width: 425px;
  height: 124px;
  border: 1px solid #555;
}

.shape .texture {
  width: 100%;
  height: 100%;
}

.handle {
  position: absolute;
  right: -6px;
  width: 11px;
  height: 11px;
  border: 2px solid #5f5f5f;
  border-radius: 50%;
  background: #fff;
}

.top { top: -6px; }
.mid { top: calc(50% - 6px); }
.bottom { bottom: -6px; }

.dialog {
  position: absolute;
  left: 444px;
  top: 171px;
  width: 698px;
  height: 440px;
  padding: 8px;
  border: 1px solid #b7472a;
  background: #fff;
  box-shadow: 1px 1px 6px rgba(0, 0, 0, 0.6);
  color: #000;
  font-family: "Liberation Serif", serif;
  font-size: 16px;
  line-height: 18px;
}

.dialog button {
  margin: 1px 9px 0 auto;
}

.dialog button svg {
  width: 12px;
  height: 12px;
}

.dialog h2 {
  margin: 28px 0 20px;
  font-size: 24px;
  line-height: 28px;
}

.dialog hr {
  margin: 0 0 17px;
  border: 0;
  border-top: 1px solid #808080;
}

.dialog p {
  margin: 0;
}

/* format pane */
.pane {
  display: flex;
  flex-direction: column;
  width: 285px;
  padding-left: 13px;
  border-left: 1px solid #bdbdbd;
}

.pane-head {
  display: flex;
  align-items: flex-start;
  height: 48px;
  padding: 10px 18px 0 0;
}

.pane-head h2 {
  margin: 0 auto 0 0;
  font-size: 20px;
  font-weight: 300;
  line-height: 30px;
}

.pane-head button {
  height: 22px;
  margin-left: 29px;
}

.pane-head svg {
  width: 14px;
  height: 14px;
}

.pane-head button + button svg {
  width: 12px;
  height: 12px;
}

.pane-tabs {
  display: flex;
  padding: 1px 0 0 5px;
}

.pane-tabs a {
  padding-right: 12px;
}

.pane-tabs .active {
  font-weight: bold;
  margin-right: 5px;
  border-right: 1px solid #d8d8d8;
}

.pane-icons {
  display: flex;
  gap: 12px;
  padding: 11px 0 7px 3px;
}

.pane-icons button {
  width: 30px;
  height: 30px;
}

.pane-icons .on { background: #c6c6c6; }
.pane-icons svg { width: 26px; height: 26px; }

.notch {
  width: 257px;
  height: 10px;
}

.pane-clip {
  width: 240px;
  overflow: hidden;
  padding-top: 7px;
}

.fill-form {
  width: 261px;
}

.fill-form h3 {
  display: flex;
  align-items: center;
  gap: 6px;
  margin: 0;
  padding-left: 7px;
  font-size: 11px;
}

.fill-form h3 svg {
  width: 10px;
  height: 10px;
}

.radios {
  margin-left: 22px;
  padding: 11px 0 5px;
  border-bottom: 1px solid #c3c3c3;
}

.radios label {
  display: flex;
  align-items: center;
  height: 22px;
  gap: 6px;
  white-space: nowrap;
}

.radios input {
  appearance: none;
  flex: none;
  width: 12px;
  height: 12px;
  margin: 0 0 4px;
  border: 1px solid #8a8a8a;
  border-radius: 50%;
  background: #fff;
}

.radios input:checked {
  border: 3px solid #b7472a;
}

.source {
  display: flex;
  flex-wrap: wrap;
  gap: 5px 9px;
  margin-left: 32px;
  padding-top: 6px;
}

.source p {
  width: 100%;
  margin: 0;
}

.source button {
  height: 24px;
  padding: 0 8px;
  border: 1px solid #8a8a8a;
  background: #fff;
}

.field {
  display: flex;
  align-items: center;
  height: 27px;
  margin-left: 32px;
}

.tall {
  height: 38px;
  padding-top: 2px;
}

.field input[type="text"],
.field select,
.tex-btn {
  appearance: none;
  height: 21px;
  width: 64px;
  margin-left: auto;
  padding: 0 6px;
  font: inherit;
  font-size: 10px;
  color: inherit;
  border: 1px solid #c3c3c3;
  border-radius: 0;
  background: #fff;
}

.field select {
  width: 77px;
  padding: 0 5px;
  font-size: 11px;
  border-color: #8a8a8a;
}

.field .wide {
  width: 118px;
}

.field .tex-btn {
  width: 37px;
  height: 29px;
  padding: 0 10px;
  border-color: #8a8a8a;
}

.tex-btn svg {
  width: 16px;
  height: 16px;
}

input[type="range"] {
  appearance: none;
  height: 11px;
  width: 73px;
  margin: 0 0 0 11px;
  background: linear-gradient(#777, #777) no-repeat center / 100% 1px;
}

input[type="range"]::-webkit-slider-thumb {
  appearance: none;
  width: 2px;
  height: 9px;
  background: #444;
}

.check {
  display: flex;
  align-items: center;
  height: 24px;
  gap: 5px;
  margin-left: 32px;
}

.check input {
  appearance: none;
  flex: none;
  width: 13px;
  height: 13px;
  margin: 0 0 3px;
  border: 1px solid #9c2f18;
  background: #b7472a url("data:image/svg+xml,%3Csvg xmlns='http://www.w3.org/2000/svg' width='11' height='11'%3E%3Cpath d='M2 5.500l2.500 2L9 3' fill='none' stroke='white' stroke-width='1.500'/%3E%3C/svg%3E") no-repeat center;
}

.inner {
  padding: 1px 0 0 10px;
}

.fill-form .line {
  padding-top: 16px;
}

.hscroll {
  display: flex;
  width: 236px;
  height: 15px;
  margin: auto 0 19px 2px;
  background: #f0f0f0;
}

.hscroll button {
  width: 15px;
  border: 1px solid #8a8a8a;
  background: #fff;
}

.hscroll svg {
  width: 8px;
  height: 8px;
}

.hthumb {
  width: 181px;
  margin-right: auto;
  border: 1px solid #8a8a8a;
  background: #fff;
}

/* status bar */
.status {
  display: flex;
  align-items: center;
  height: 22px;
  padding-left: 11px;
  background: #f3f3f3;
  border-top: 1px solid #c6c6c6;
}

.status strong {
  font-weight: 600;
}

.book {
  width: 16px;
  height: 14px;
  margin: 0 15px 0 20px;
}

.a11y {
  width: 18px;
  height: 16px;
  margin-right: 1px;
}

.status-right {
  display: flex;
  align-items: center;
  height: 100%;
  margin-left: auto;
}

.status-right svg {
  width: 14px;
  height: 14px;
}

.notes,
.comments {
  gap: 4px;
  margin-right: 19px;
}

.view {
  width: 40px;
  height: 100%;
}

.view.on { background: #c6c6c6; }

.step {
  width: 16px;
  font-size: 14px;
}

.view + .step {
  margin-left: 2px;
}

.status-right .zoom {
  width: 100px;
  margin: 0;
}

input.zoom::-webkit-slider-thumb {
  width: 5px;
  height: 11px;
}

.pct {
  width: 38px;
  text-align: right;
}

.fit {
  margin: 0 6px 0 12px;
}

/* taskbar */
.taskbar {
  display: flex;
  gap: 1px;
  height: 40px;
  padding-left: 1px;
  background: #d6d5d6;
}

.taskbar button {
  flex: none;
  width: 48px;
  height: 40px;
}

.taskbar button svg {
  width: 24px;
  height: 24px;
}

.taskbar .spill {
  overflow: visible;
}

.taskbar .open {
  background: linear-gradient(#0067b8, #0067b8) no-repeat center bottom / 40px 2px;
}

.taskbar .current {
  background: linear-gradient(#0067b8, #0067b8) no-repeat center bottom / 48px 2px, #efeeee;
}

.logo-letter {
  font: bold 11px "Open Sans", sans-serif;
  fill: #fff;
  text-anchor: middle;
}

.serif-letter {
  font: bold 24px "Liberation Serif", serif;
  text-anchor: middle;
}

.badge-text {
  font: 10px "Open Sans", sans-serif;
  fill: #fff;
  text-anchor: middle;
}

.tray {
  display: flex;
  align-items: center;
  margin-left: auto;
  padding-right: 24px;
  color: #111;
}

.moon { width: 24px; height: 28px; }

.weather {
  margin: 0 25px 0 7px;
  font-size: 13px;
}

.up { width: 14px; height: 10px; }
.speaker { width: 18px; height: 16px; margin-left: 8px; }

.clock {
  display: flex;
  flex-direction: column;
  align-items: center;
  width: 76px;
  font-size: 11px;
  line-height: 18px;
}

.notify { width: 18px; height: 18px; margin-left: 8px; }
```
